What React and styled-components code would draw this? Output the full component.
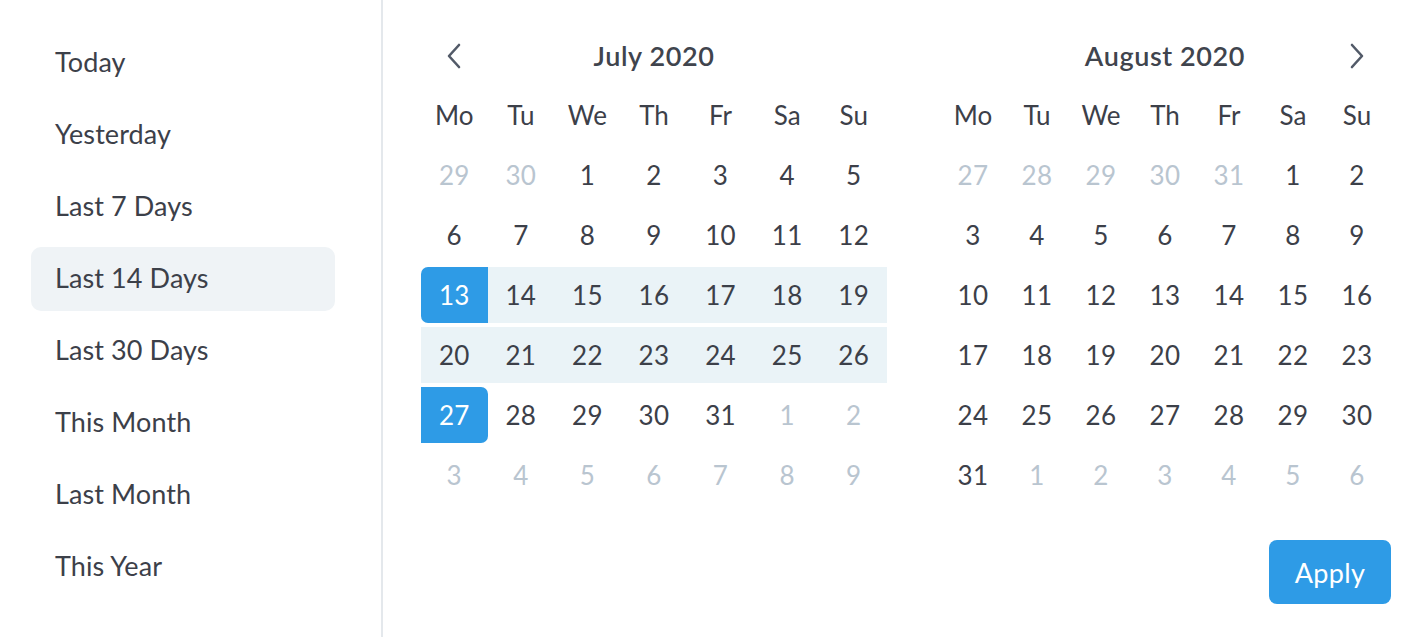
import React from "react";
import styled, { createGlobalStyle } from "styled-components";

const GlobalStyle = createGlobalStyle`
  html, body {
    margin: 0;
    padding: 0;
    background: #ffffff;
  }
  body {
    font-family: "Lato", "Noto Sans", "Liberation Sans", sans-serif;
    color: #3c4049;
    -webkit-font-smoothing: antialiased;
  }
`;

const presets = [
  "Today",
  "Yesterday",
  "Last 7 Days",
  "Last 14 Days",
  "Last 30 Days",
  "This Month",
  "Last Month",
  "This Year",
];

const weekdays = ["Mo", "Tu", "We", "Th", "Fr", "Sa", "Su"];

// builds 6 weeks of cells, monday first
const buildMonth = (year, month) => {
  const first = new Date(year, month, 1);
  const offset = (first.getDay() + 6) % 7;
  const start = new Date(year, month, 1 - offset);
  const cells = [];
  for (let i = 0; i < 42; i++) {
    const d = new Date(start.getFullYear(), start.getMonth(), start.getDate() + i);
    cells.push({ day: d.getDate(), outside: d.getMonth() !== month, date: d });
  }
  return cells;
};

const rangeStart = new Date(2020, 6, 13).getTime();
const rangeEnd = new Date(2020, 6, 27).getTime();

const cellState = (cell) => {
  if (cell.outside) return "muted";
  const t = cell.date.getTime();
  if (t === rangeStart) return "start";
  if (t === rangeEnd) return "end";
  if (t > rangeStart && t < rangeEnd) return "range";
  return "normal";
};

const Chevron = ({ dir }) => (
  <svg width="16" height="26" viewBox="0 0 16 26" fill="none">
    <path
      d={dir === "left" ? "M13 2 L3 13 L13 24" : "M3 2 L13 13 L3 24"}
      stroke="#525a68"
      strokeWidth="2.6"
      strokeLinecap="round"
      strokeLinejoin="round"
    />
  </svg>
);

const Month = ({ title, year, month, width, nav }) => {
  const cells = buildMonth(year, month);
  return (
    <MonthBox $width={width}>
      <MonthHeader>
        <NavSlot>{nav === "left" && <Chevron dir="left" />}</NavSlot>
        <MonthTitle>{title}</MonthTitle>
        <NavSlot>{nav === "right" && <Chevron dir="right" />}</NavSlot>
      </MonthHeader>
      <DayGrid>
        {weekdays.map((w) => (
          <Weekday key={w}>{w}</Weekday>
        ))}
        {cells.map((c, i) => (
          <DayCell key={i} $state={cellState(c)}>
            {c.day}
          </DayCell>
        ))}
      </DayGrid>
    </MonthBox>
  );
};

const App = () => {
  return (
    <>
      <GlobalStyle />
      <Picker>
        <Sidebar>
          {presets.map((p) => (
            <Preset key={p} $active={p === "Last 14 Days"}>
              {p}
            </Preset>
          ))}
        </Sidebar>
        <Main>
          <Calendars>
            <Month title="July 2020" year={2020} month={6} width={466} nav="left" />
            <Month title="August 2020" year={2020} month={7} width={448} nav="right" />
          </Calendars>
          <Footer>
            <ApplyButton>Apply</ApplyButton>
          </Footer>
        </Main>
      </Picker>
    </>
  );
};

export default App;

const Picker = styled.div`
  display: flex;
  width: 1423px;
  height: 637px;
  background: #fff;
`;

const Sidebar = styled.div`
  width: 304px;
  flex-shrink: 0;
  padding: 31px 46px 0 31px;
  border-right: 2px solid #e4e8ec;
  display: flex;
  flex-direction: column;
  gap: 8px;
`;

const Preset = styled.div`
  height: 64px;
  box-sizing: border-box;
  padding: 0 0 3px 24px;
  display: flex;
  align-items: center;
  border-radius: 10px;
  font-size: 27px;
  letter-spacing: 0.1px;
  color: #3c4049;
  background: ${(p) => (p.$active ? "#eff3f6" : "transparent")};
`;

const Main = styled.div`
  flex: 1;
  padding: 28px 32px 0 38px;
  display: flex;
  flex-direction: column;
`;

const Calendars = styled.div`
  display: flex;
  gap: 54px;
`;

const MonthBox = styled.div`
  width: ${(p) => p.$width}px;
  display: flex;
  flex-direction: column;
`;

const MonthHeader = styled.div`
  display: flex;
  align-items: center;
  height: 56px;
  margin-bottom: 3px;
`;

const NavSlot = styled.div`
  width: calc(100% / 7);
  display: flex;
  justify-content: center;
  align-items: center;
`;

const MonthTitle = styled.div`
  flex: 1;
  text-align: center;
  font-size: 27px;
  font-weight: 600;
  letter-spacing: 0.6px;
  color: #40444d;
  padding-bottom: 2px;
`;

const DayGrid = styled.div`
  display: grid;
  grid-template-columns: repeat(7, 1fr);
  grid-auto-rows: 56px;
  row-gap: 4px;
`;

const Weekday = styled.div`
  display: flex;
  align-items: center;
  justify-content: center;
  font-size: 26px;
  color: #3c4049;
`;

const cellBg = {
  start: "#2e9be6",
  end: "#2e9be6",
  range: "#eaf3f7",
};

const cellColor = {
  start: "#ffffff",
  end: "#ffffff",
  muted: "#b9c5d0",
};

const cellRadius = {
  start: "7px 0 0 7px",
  end: "0 7px 7px 0",
};

const DayCell = styled.div`
  display: flex;
  align-items: center;
  justify-content: center;
  font-size: 26px;
  letter-spacing: 0.3px;
  color: ${(p) => cellColor[p.$state] || "#3c4049"};
  background: ${(p) => cellBg[p.$state] || "transparent"};
  border-radius: ${(p) => cellRadius[p.$state] || "0"};
`;

const Footer = styled.div`
  display: flex;
  justify-content: flex-end;
  margin-top: 37px;
`;

const ApplyButton = styled.button`
  width: 122px;
  height: 64px;
  border: none;
  border-radius: 8px;
  background: #2e9be6;
  color: #fff;
  font-family: inherit;
  font-size: 27px;
  letter-spacing: 0.3px;
  cursor: pointer;
`;
